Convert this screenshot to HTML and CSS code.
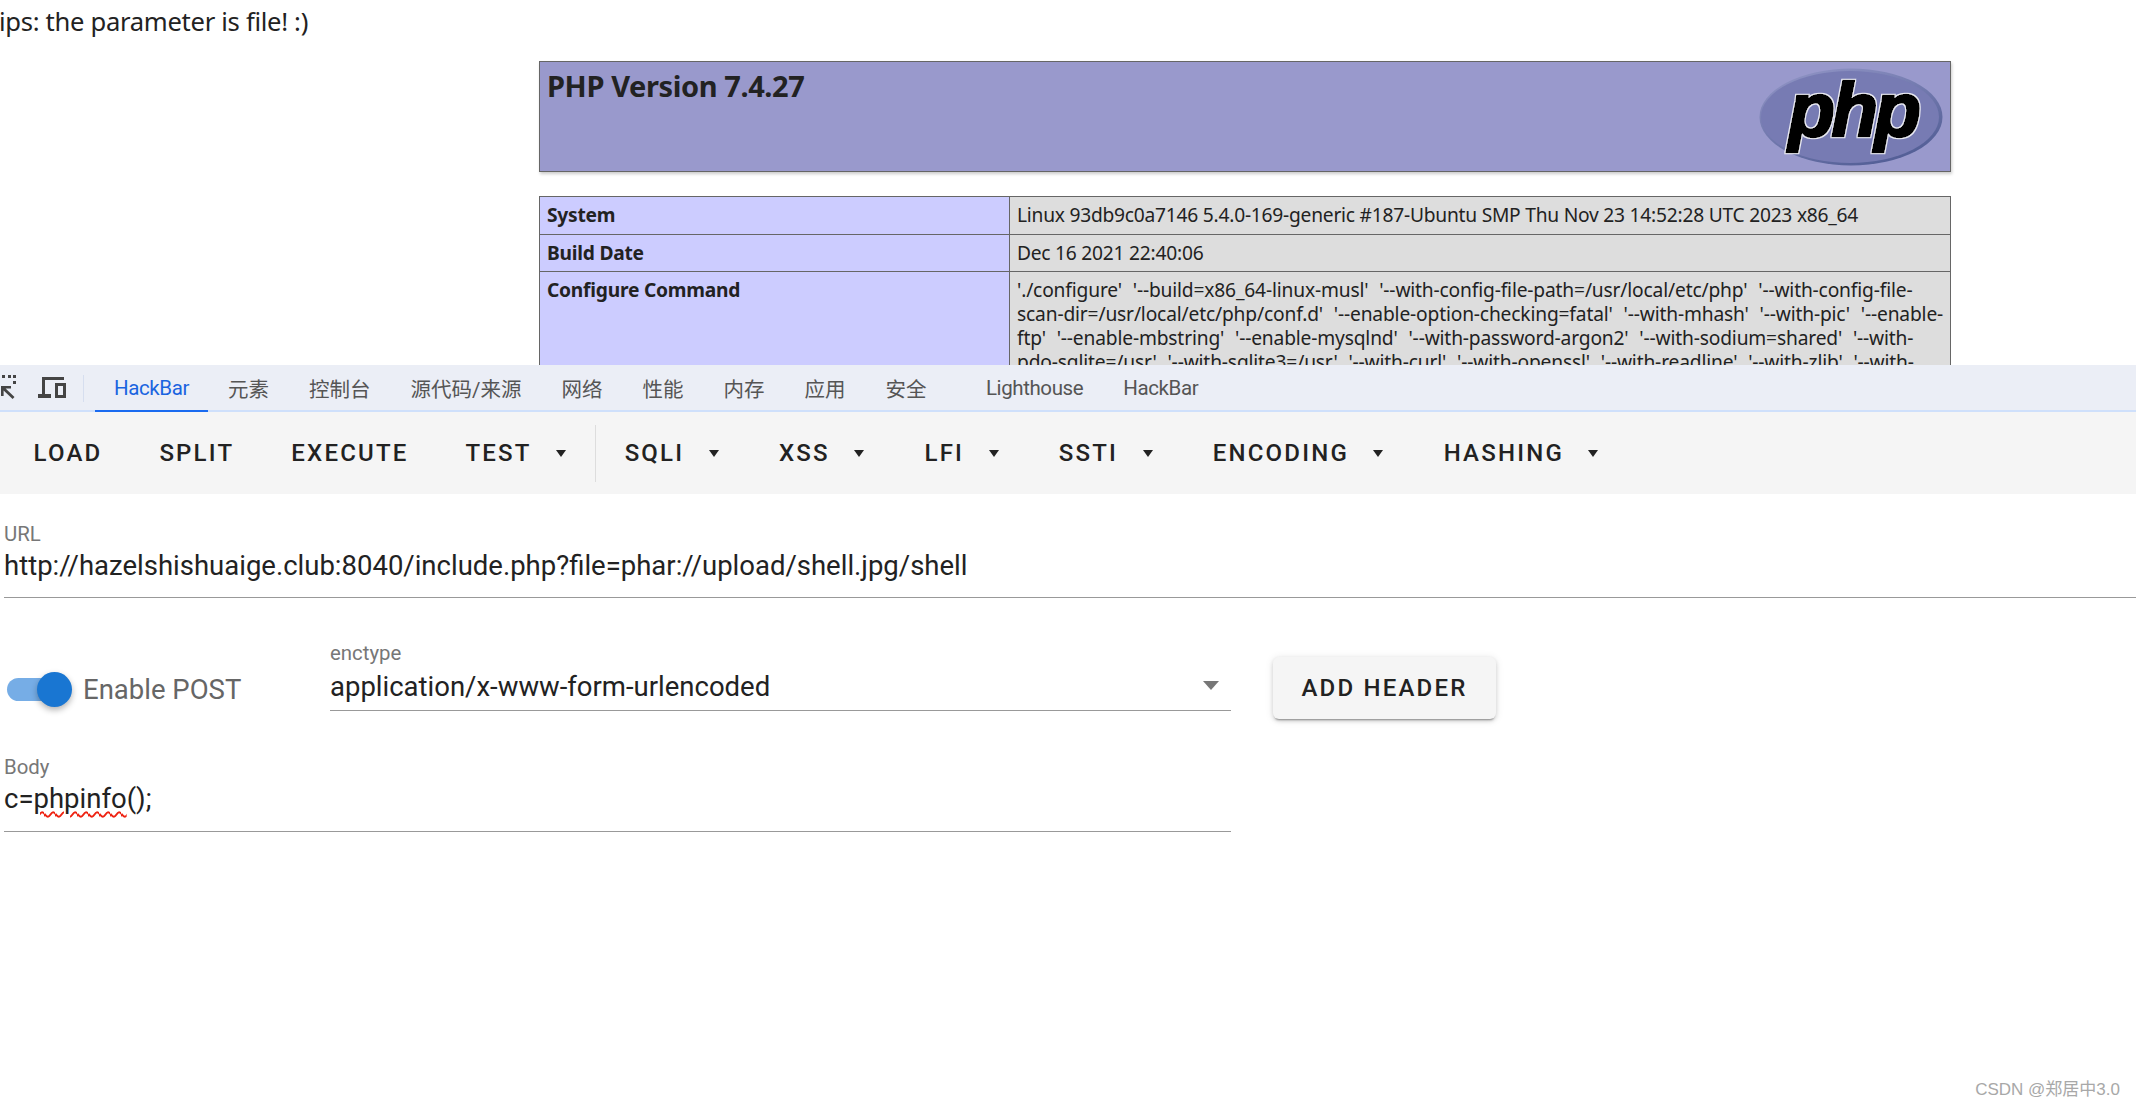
FILE: index.html
```html
<!DOCTYPE html>
<html lang="zh-CN">
<head>
<meta charset="utf-8">
<title>HackBar</title>
<link rel="stylesheet" href="styles.css">
</head>
<body>
<div class="page-pane">
  <p class="tip">Tips: the parameter is file! :)</p>
  <div class="phpinfo">
    <div class="php-head">
      <h1>PHP Version 7.4.27</h1>
      <svg class="php-logo" viewBox="0 0 184 98" width="184" height="98" aria-label="php logo">
        <defs>
          <linearGradient id="edge" x1="0.2" y1="0" x2="0.8" y2="1">
            <stop offset="0" stop-color="#8f93c4"/>
            <stop offset="1" stop-color="#4f5b93"/>
          </linearGradient>
          <filter id="halo" x="-10%" y="-10%" width="120%" height="120%">
            <feMorphology in="SourceAlpha" operator="dilate" radius="1.4" result="fat"/>
            <feFlood flood-color="#fff" flood-opacity="0.85"/>
            <feComposite in2="fat" operator="in" result="white"/>
            <feMerge><feMergeNode in="white"/><feMergeNode in="SourceGraphic"/></feMerge>
          </filter>
        </defs>
        <ellipse cx="92" cy="49" rx="91.5" ry="48.5" fill="url(#edge)"/>
        <ellipse cx="91" cy="49" rx="89" ry="46" fill="#777bb3"/>
        <text class="php-word" x="94" y="68" text-anchor="middle" filter="url(#halo)">php</text>
      </svg>
    </div>
    <table class="info">
      <tr><td class="e">System</td><td class="v">Linux 93db9c0a7146 5.4.0-169-generic #187-Ubuntu SMP Thu Nov 23 14:52:28 UTC 2023 x86_64</td></tr>
      <tr><td class="e">Build Date</td><td class="v">Dec 16 2021 22:40:06</td></tr>
      <tr><td class="e">Configure Command</td><td class="v cfg">'./configure' '--build=x86_64-linux-musl' '--with-config-file-path=/usr/local/etc/php' '--with-config-file-<br>scan-dir=/usr/local/etc/php/conf.d' '--enable-option-checking=fatal' '--with-mhash' '--with-pic' '--enable-<br>ftp' '--enable-mbstring' '--enable-mysqlnd' '--with-password-argon2' '--with-sodium=shared' '--with-<br>pdo-sqlite=/usr' '--with-sqlite3=/usr' '--with-curl' '--with-openssl' '--with-readline' '--with-zlib' '--with-</td></tr>
    </table>
  </div>
</div>

<nav class="tabs">
  <span class="tool-icons">
    <svg class="ic-inspect" viewBox="0 0 18 26" width="18" height="26">
      <path d="M2 1h3v3H2zM8 1h3v3H8zM13 1h3v3h-3zM13 7h3v3h-3z" fill="#444"/>
      <path d="M1 12h10v2.6H5.6L14.5 23l-1.9 1.9L3.6 16.4V22H1z" fill="#444"/>
    </svg>
    <svg class="ic-device" viewBox="0 0 30 26" width="30" height="26">
      <path d="M5 3h22v3H8v14h6v4H1v-4h4z" fill="#444"/>
      <path d="M18 9h11v15H18zM21 12v9h5v-9z" fill="#444" fill-rule="evenodd"/>
    </svg>
  </span>
  <span class="tab active latin">HackBar</span>
  <span class="tab">元素</span>
  <span class="tab">控制台</span>
  <span class="tab">源代码/来源</span>
  <span class="tab">网络</span>
  <span class="tab">性能</span>
  <span class="tab">内存</span>
  <span class="tab">应用</span>
  <span class="tab">安全</span>
  <span class="tab tab-after-gap latin">Lighthouse</span>
  <span class="tab latin">HackBar</span>
</nav>

<div class="toolbar">
  <span class="btn">LOAD</span>
  <span class="btn">SPLIT</span>
  <span class="btn">EXECUTE</span>
  <span class="btn">TEST<i class="caret"></i></span>
  <span class="divider"></span>
  <span class="btn">SQLI<i class="caret"></i></span>
  <span class="btn">XSS<i class="caret"></i></span>
  <span class="btn">LFI<i class="caret"></i></span>
  <span class="btn">SSTI<i class="caret"></i></span>
  <span class="btn">ENCODING<i class="caret"></i></span>
  <span class="btn">HASHING<i class="caret"></i></span>
</div>

<main class="form">
  <div class="field field-url">
    <label>URL</label>
    <div class="value">http://hazelshishuaige.club:8040/include.php?file=phar://upload/shell.jpg/shell</div>
  </div>
  <div class="post-row">
    <div class="switch-wrap">
      <span class="switch"><span class="thumb"></span></span>
      <span class="switch-label">Enable POST</span>
    </div>
    <div class="field field-select">
      <label>enctype</label>
      <div class="value">application/x-www-form-urlencoded<i class="select-caret"></i></div>
    </div>
    <span class="add-header">ADD HEADER</span>
  </div>
  <div class="field field-body">
    <label>Body</label>
    <div class="value">c=<span class="spell">phpinfo</span>();</div>
  </div>
</main>
<div class="watermark">CSDN @郑居中3.0</div>
</body>
</html>
```
FILE: styles.css
```css
* { box-sizing: border-box; }
html, body { margin: 0; padding: 0; height: 100%; overflow: hidden; background: #fff; }
body { position: relative; font-family: Roboto, "Noto Sans CJK SC", sans-serif; color: #222; }

.page-pane { height: 365px; overflow: hidden; font-family: "Noto Sans", "Open Sans", sans-serif; }
.tip { margin: 0 0 0 -15px; padding-top: 5px; height: 61px; font-size: 25.6px; line-height: 34px; letter-spacing: -0.3px; color: #222; white-space: nowrap; }
.phpinfo { margin-left: 539px; width: 1412px; }
.php-head { height: 111px; background: #99c; border: 1px solid #666; box-shadow: 1px 2px 3px #ccc; display: flex; justify-content: space-between; padding: 6px 7px 0 7px; position: relative; }
.php-head h1 { margin: 0; font-size: 29px; line-height: 36px; font-weight: 700; color: #222; letter-spacing: -0.4px; }
.php-logo { flex: none; }
.php-word { font-family: "Liberation Sans", sans-serif; font-weight: 700; font-style: italic; font-size: 76px; letter-spacing: -3.5px; fill: #000; stroke: #000; stroke-width: 2.6px; }
.info { margin-top: 24px; width: 1412px; border-collapse: collapse; table-layout: fixed; font-size: 19.2px; line-height: 24px; color: #222; letter-spacing: -0.23px; }
.info td { border: 1px solid #666; padding: 6.3px 7px; vertical-align: top; white-space: nowrap; }
.e { width: 470px; background: #ccf; font-weight: 700; }
.v { background: #ddd; }
.info td.cfg { word-spacing: 6px; letter-spacing: -0.16px; }

.tabs { height: 47px; background: #ebeef6; border-bottom: 2px solid #cfe0fb; display: flex; align-items: stretch; font-size: 20.5px; font-family: Roboto, "Noto Sans CJK SC", sans-serif; color: #555; }
.tool-icons { width: 95px; display: flex; align-items: flex-start; gap: 19px; padding-top: 9px; position: relative; }
.tool-icons::after { content: ""; position: absolute; left: 83px; top: 10px; height: 27px; width: 1px; background: #d6deef; }
.tab { padding: 0 20px; display: flex; align-items: center; height: 45px; white-space: nowrap; }
.latin { letter-spacing: -0.4px; }
.tab.active { color: #1a64e0; position: relative; padding: 0 19px; }
.tab.active::after { content: ""; position: absolute; left: 0; right: 0; bottom: -2px; height: 2px; background: #1a6bf0; }
.tab-after-gap { margin-left: 19.5px; }

.toolbar { height: 82px; background: #f5f5f5; display: flex; align-items: center; padding-left: 5px; font-size: 24px; font-weight: 500; letter-spacing: 2.2px; color: #222; }
.btn { padding: 0 28.5px; display: inline-flex; align-items: center; white-space: nowrap; }
.caret { display: inline-block; margin-left: 24.5px; margin-right: 3.2px; width: 0; height: 0; border-left: 5.5px solid transparent; border-right: 5.5px solid transparent; border-top: 7px solid #222; }
.divider { width: 1px; height: 57px; background: #ddd; margin-left: -2.7px; }

.form { padding: 27px 0 0 4px; }
.field label { display: block; font-size: 20.4px; line-height: 26px; color: #777; }
.value { font-size: 27.5px; line-height: 38px; color: #222; white-space: nowrap; }
.field-url .value { padding-bottom: 12px; border-bottom: 1.5px solid #999; }
.post-row { display: flex; margin-top: 42px; height: 73px; }
.switch-wrap { width: 326px; display: flex; align-items: center; padding-top: 26px; padding-left: 3px; }
.switch { position: relative; display: block; width: 53px; height: 23px; border-radius: 12px; background: #76ade6; }
.thumb { position: absolute; right: -12px; top: -6px; width: 35px; height: 35px; border-radius: 50%; background: #1976d2; box-shadow: 0 3px 6px rgba(0,0,0,.3); }
.switch-label { margin-left: 23px; font-size: 27.5px; color: #666; }
.field-select { width: 901px; }
.field-select .value { position: relative; height: 45px; line-height: 41px; border-bottom: 1.5px solid #999; }
.select-caret { position: absolute; right: 12px; top: 15px; width: 0; height: 0; border-left: 8px solid transparent; border-right: 8px solid transparent; border-top: 9px solid #777; }
.add-header { margin-left: 42px; margin-top: 17px; width: 223px; height: 62px; border-radius: 6px; background: #f5f5f5; display: flex; align-items: center; justify-content: center; font-size: 24px; font-weight: 500; letter-spacing: 2.2px; color: #222; box-shadow: 0 3px 2px -2px rgba(0,0,0,.35), 0 2px 4px rgba(0,0,0,.14), 0 1px 8px rgba(0,0,0,.1); }
.field-body { margin-top: 41px; width: 1227px; }
.field-body .value { padding-bottom: 13px; border-bottom: 1.5px solid #999; }
.spell { text-decoration: underline wavy #e21; text-decoration-thickness: 1.6px; text-underline-offset: 3px; }

.watermark { position: absolute; right: 16px; bottom: 8px; font-family: "Liberation Sans", "Noto Sans CJK SC", sans-serif; font-size: 17px; line-height: 20px; color: #a8a8a8; }
```
